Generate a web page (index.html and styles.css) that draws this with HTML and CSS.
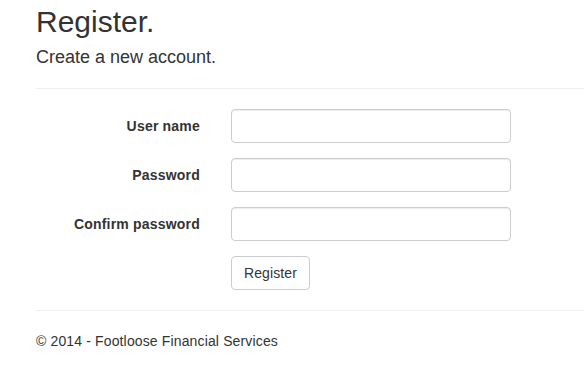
FILE: index.html
```html
<!DOCTYPE html>
<html>
<head>
<meta charset="utf-8">
<title>Register</title>
<link rel="stylesheet" href="styles.css">
</head>
<body>
<div class="page">
  <h2 class="title">Register.</h2>
  <h4 class="subtitle">Create a new account.</h4>
  <hr class="rule">
  <form class="form">
    <div class="form-group">
      <label class="control-label">User name</label>
      <input class="form-control" type="text">
    </div>
    <div class="form-group">
      <label class="control-label">Password</label>
      <input class="form-control" type="password">
    </div>
    <div class="form-group">
      <label class="control-label">Confirm password</label>
      <input class="form-control" type="password">
    </div>
    <div class="form-group">
      <span class="control-label"></span>
      <button class="btn" type="button">Register</button>
    </div>
  </form>
  <hr class="rule">
  <footer class="footer">
    <p class="footer-text">© 2014 - Footloose Financial Services</p>
  </footer>
</div>
</body>
</html>
```

FILE: styles.css
```css
html, body {
  margin: 0;
  padding: 0;
  background: #fff;
}
body {
  font-family: "Liberation Sans", Arial, Helvetica, sans-serif;
  font-size: 14px;
  line-height: 20px;
  color: #333;
}
.page {
  padding-left: 36px;
  padding-top: 5px;
}
.title {
  margin: 0 0 10px 0;
  font-size: 30px;
  font-weight: 500;
  line-height: 33px;
}
.subtitle {
  margin: 0;
  font-size: 18px;
  font-weight: 500;
  line-height: 19.8px;
}
.rule {
  margin: 20px 0;
  border: 0;
  border-top: 1px solid #eee;
  height: 0;
}
.form {
  margin: 0;
}
.form-group {
  display: flex;
  align-items: flex-start;
  margin-bottom: 15px;
}
.form-group:last-child {
  margin-bottom: 0;
}
.control-label {
  display: block;
  width: 164px;
  flex: none;
  margin-right: 31px;
  padding-top: 7px;
  text-align: right;
  font-weight: bold;
  line-height: 20px;
  letter-spacing: 0.2px;
}
.form-control {
  display: block;
  box-sizing: border-box;
  width: 280px;
  height: 34px;
  margin: 0;
  padding: 6px 12px;
  font-family: inherit;
  font-size: 14px;
  color: #555;
  background: #fff;
  border: 1px solid #ccc;
  border-radius: 4px;
  box-shadow: inset 0 1px 1px rgba(0,0,0,.075);
}
.btn {
  display: inline-block;
  box-sizing: border-box;
  height: 34px;
  margin: 0;
  padding: 6px 12px;
  font-family: inherit;
  font-size: 14px;
  line-height: 20px;
  letter-spacing: 0.1px;
  color: #333;
  background: #fff;
  border: 1px solid #ccc;
  border-radius: 4px;
}
.footer-text {
  margin: 0 0 10px 0;
  letter-spacing: 0.14px;
}
```
